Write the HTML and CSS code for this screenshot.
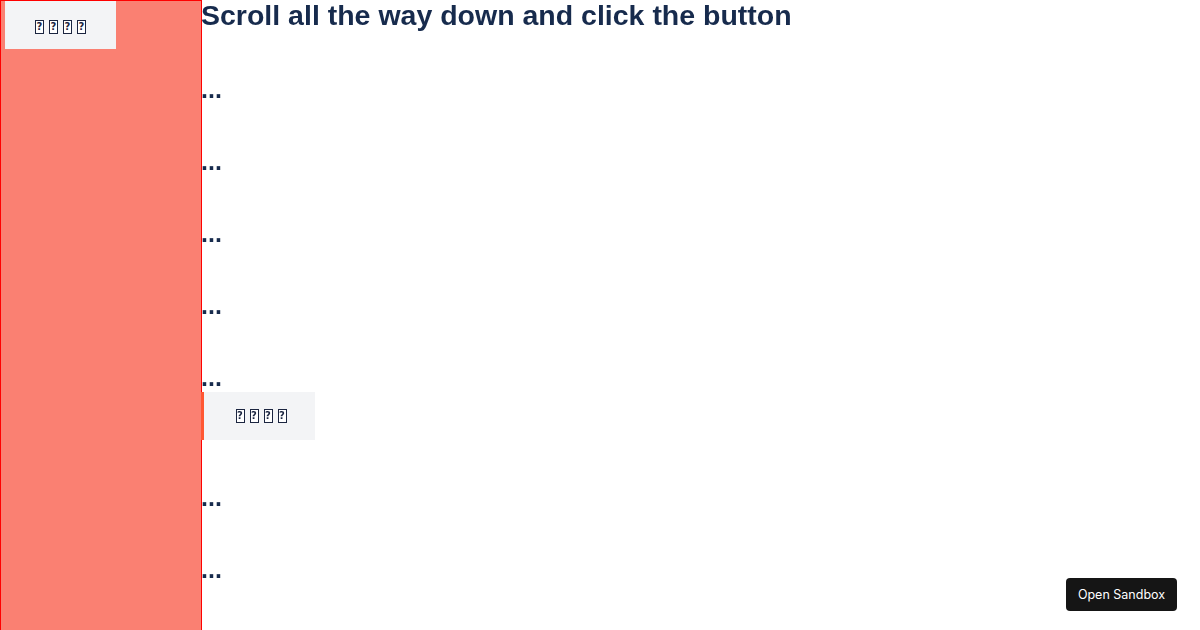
FILE: index.html
```html
<!DOCTYPE html>
<html>
<head>
<meta charset="utf-8">
<link rel="stylesheet" href="styles.css">
</head>
<body>
<div class="layout">
  <aside class="sidebar">
    <button class="tag-btn first"><span class="glyph">?</span><span class="glyph">?</span><span class="glyph">?</span><span class="glyph">?</span></button>
  </aside>
  <main class="content">
    <h1 class="title">Scroll all the way down and click the button</h1>
    <h2 class="dots">...</h2>
    <h2 class="dots">...</h2>
    <h2 class="dots">...</h2>
    <h2 class="dots">...</h2>
    <h2 class="dots">...</h2>
    <button class="tag-btn accent"><span class="glyph">?</span><span class="glyph">?</span><span class="glyph">?</span><span class="glyph">?</span></button>
    <h2 class="dots">...</h2>
    <h2 class="dots">...</h2>
  </main>
</div>
<button class="sandbox">Open Sandbox</button>
</body>
</html>
```
FILE: styles.css
```css
html, body {
  margin: 0;
  padding: 0;
  height: 100%;
  overflow: hidden;
  background: #ffffff;
  font-family: "Liberation Sans", Arial, sans-serif;
}
.layout {
  display: flex;
  height: 630px;
}
.sidebar {
  flex: none;
  box-sizing: content-box;
  width: 196px;
  padding: 0 0 0 4px;
  margin-right: -1px;
  background: #fa8072;
  border: 1px solid #ff0000;
  border-bottom: none;
}
.tag-btn {
  display: flex;
  align-items: center;
  justify-content: center;
  gap: 5px;
  width: 111px;
  height: 48px;
  border: none;
  background: #f3f4f6;
  padding: 0;
}
.tag-btn.first {
  padding-top: 3px;
}
.glyph {
  display: inline-block;
  box-sizing: border-box;
  width: 9px;
  height: 14px;
  border: 1px solid #1b2540;
  background: #ffffff;
  color: #1b2540;
  font-family: "DejaVu Sans", sans-serif;
  font-size: 10px;
  font-weight: bold;
  line-height: 12px;
  text-align: center;
  overflow: hidden;
}
.tag-btn.accent {
  position: relative;
  z-index: 1;
  border-left: 3px solid #ff5733;
  width: 114px;
  padding-left: 3px;
}
.content {
  flex: 1;
  position: relative;
  z-index: 1;
  color: #172b4d;
}
.title {
  margin: 0;
  font-size: 28.5px;
  line-height: 31.5px;
  font-weight: bold;
}
.dots {
  margin: 43.5px 0 0 0;
  font-size: 25px;
  line-height: 28.5px;
  font-weight: bold;
}
.sandbox {
  position: fixed;
  right: 23px;
  bottom: 19px;
  width: 111px;
  height: 33px;
  background: #151515;
  color: #fff;
  border: none;
  border-radius: 4px;
  font-family: Inter, "Liberation Sans", sans-serif;
  font-size: 12.5px;
  padding: 0;
}
```
